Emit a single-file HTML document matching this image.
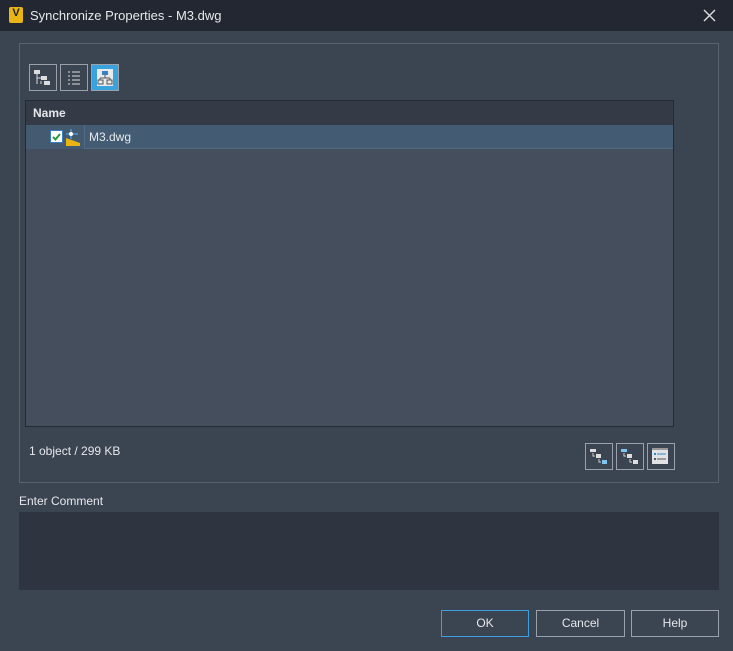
<!DOCTYPE html><html><head><style>
body{margin:0;width:733px;height:651px;background:#3b4451;font-family:"Liberation Sans",sans-serif;font-size:12px;color:#e6e8eb;position:relative;overflow:hidden}
.a{position:absolute;box-sizing:border-box}
.tb{border:1px solid #9aa1aa}
.btn{border:1px solid #9aa1aa;text-align:center;line-height:24px;font-size:12px}
</style></head><body>
<div class="a" style="left:0;top:0;width:733px;height:31px;background:#222731"></div>
<div class="a" style="left:9px;top:7px;width:14px;height:16px;background:#e8b514;border-radius:2px;color:#222;font-weight:bold;font-size:11px;text-align:center;line-height:13px">V</div>
<div class="a" style="left:30px;top:8px;font-size:13px">Synchronize Properties - M3.dwg</div>
<svg class="a" style="left:703px;top:9px" width="13" height="13"><path d="M1 1L12 12M12 1L1 12" stroke="#ddd" stroke-width="1.4"/></svg>
<div class="a" style="left:19px;top:43px;width:700px;height:440px;border:1px solid #566271"></div>
<div class="a tb" style="left:29px;top:64px;width:28px;height:27px"><svg width="26" height="25"><rect x="4" y="5" width="6" height="4" fill="#ddd"/><path d="M7 9V19M7 13H11M11 16V19" stroke="#ddd"/><rect x="11" y="11" width="6" height="4" fill="#ddd"/><rect x="14" y="16" width="6" height="4" fill="#ddd"/></svg></div>
<div class="a tb" style="left:60px;top:64px;width:28px;height:27px"><svg width="26" height="25"><path d="M7 7h2M7 11h2M7 15h2M7 19h2M11 7h8M11 11h8M11 15h8M11 19h8" stroke="#ddd"/></svg></div>
<div class="a" style="left:91px;top:64px;width:28px;height:27px;background:#3aa3dd;border:1px solid #9aa1aa"><svg width="26" height="25"><rect x="5" y="4" width="16" height="17" fill="#e8eaec"/><rect x="10" y="6" width="6" height="4" fill="#3a7fc0"/><path d="M13 10v3M8 13h10M8 13v2M18 13v2" stroke="#555"/><rect x="6" y="15" width="5" height="4" fill="none" stroke="#555"/><rect x="15" y="15" width="5" height="4" fill="none" stroke="#555"/></svg></div>
<div class="a" style="left:25px;top:100px;width:649px;height:327px;background:#454e5d;border:1px solid #242a33"></div>
<div class="a" style="left:26px;top:101px;width:647px;height:24px;background:#343b47"></div>
<div class="a" style="left:33px;top:106px;font-weight:bold">Name</div>
<div class="a" style="left:26px;top:125px;width:647px;height:24px;background:#445a70"></div>
<div class="a" style="left:84px;top:125px;width:589px;height:24px;background:#435b73;border-left:1px solid #506a82;border-bottom:1px solid #506a82"></div>
<div class="a" style="left:50px;top:130px;width:13px;height:13px;background:#fff;border:1px solid #3a7fc0"><svg width="11" height="11" style="display:block"><path d="M2 6l2.5 2.5L9 3" stroke="#2a9a3a" stroke-width="2" fill="none"/></svg></div>
<svg class="a" style="left:66px;top:128px" width="16" height="18"><path d="M0 12L14 17H0z" fill="#e8b514"/><path d="M0 18V10l14 5v3z" fill="#e8b514"/><path d="M5 1v10M0 6h12" stroke="#4a9ad8" stroke-width="1.5"/><circle cx="5" cy="6" r="2" fill="#fff"/></svg>
<div class="a" style="left:89px;top:130px">M3.dwg</div>
<div class="a" style="left:29px;top:444px">1 object / 299 KB</div>
<div class="a tb" style="left:585px;top:443px;width:28px;height:27px"><svg width="26" height="25"><rect x="4" y="5" width="6" height="3" fill="#ddd"/><path d="M7 9v3h2M13 15v3h2" stroke="#ddd"/><rect x="10" y="10" width="5" height="4" fill="#ddd"/><rect x="16" y="16" width="5" height="4" fill="#7fc4f0"/></svg></div>
<div class="a tb" style="left:616px;top:443px;width:28px;height:27px"><svg width="26" height="25"><rect x="4" y="5" width="6" height="3" fill="#7fc4f0"/><path d="M7 9v3h2M13 15v3h2" stroke="#ddd"/><rect x="10" y="10" width="5" height="4" fill="#ddd"/><rect x="16" y="16" width="5" height="4" fill="#ddd"/></svg></div>
<div class="a tb" style="left:647px;top:443px;width:28px;height:27px"><svg width="26" height="25"><rect x="4" y="4" width="16" height="16" fill="#e0e2e4"/><rect x="4" y="4" width="16" height="2" fill="#999"/><rect x="6" y="9" width="2" height="2" fill="#2a8ad0"/><path d="M9 10h9" stroke="#2a8ad0"/><rect x="6" y="14" width="2" height="2" fill="#555"/><path d="M9 15h9" stroke="#555"/></svg></div>
<div class="a" style="left:19px;top:494px">Enter Comment</div>
<div class="a" style="left:19px;top:512px;width:700px;height:78px;background:#2e3540"></div>
<div class="a btn" style="left:441px;top:610px;width:88px;height:27px;border-color:#3d9ee0">OK</div>
<div class="a btn" style="left:536px;top:610px;width:89px;height:27px">Cancel</div>
<div class="a btn" style="left:631px;top:610px;width:88px;height:27px">Help</div>
</body></html>
